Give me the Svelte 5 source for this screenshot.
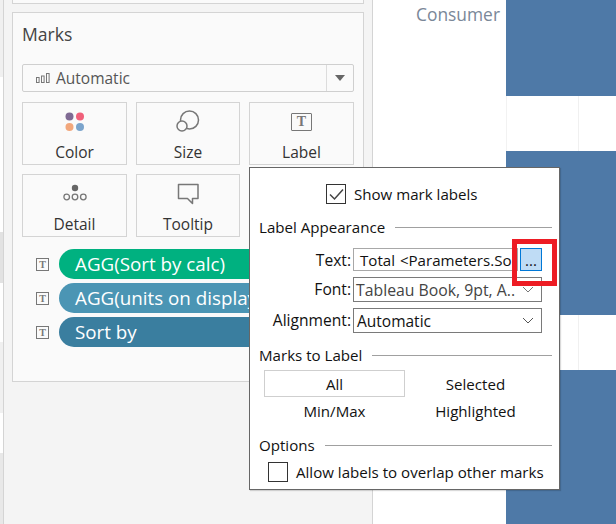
<script>
  const strip = [
    { h: 77, c: '#f0f0f0' },
    { h: 155, c: '#ffffff' },
    { h: 51, c: '#e2e2e2' },
    { h: 59, c: '#ffffff' },
    { h: 71, c: '#f0f0f0' },
    { h: 40, c: '#ffffff' },
    { h: 71, c: '#e8e8e8' },
  ];
  const pills = [
    { name: 'AGG(Sort by calc)', color: '#00b180' },
    { name: 'AGG(units on display)', color: '#4b95b4' },
    { name: 'Sort by', color: '#3a7e9f' },
  ];
</script>

<div class="page">
  <div class="strip">
    {#each strip as s}
      <div style="height: {s.h}px; background: {s.c}"></div>
    {/each}
  </div>

  <aside class="sidebar">
    <div class="top-card"></div>
    <section class="marks">
      <h2>Marks</h2>
      <div class="mark-type">
        <svg width="14" height="10" viewBox="0 0 14 10" fill="none" stroke="#777" stroke-width="1">
          <rect x="0.5" y="4.5" width="2.6" height="5" />
          <rect x="5.5" y="3" width="2.6" height="6.5" />
          <rect x="10.5" y="0.5" width="2.6" height="9" />
        </svg>
        <span class="mark-name">Automatic</span>
        <span class="caret"><i></i></span>
      </div>

      <div class="shelf">
        <div class="tile">
          <svg width="24" height="24" viewBox="0 0 24 24">
            <circle cx="6.5" cy="6.5" r="4" fill="#7f6a93" />
            <circle cx="17" cy="6.5" r="4" fill="#f0607a" />
            <circle cx="6.5" cy="17" r="4" fill="#f2a77c" />
            <circle cx="17" cy="17" r="4" fill="#7ba4cc" />
          </svg>
          <span>Color</span>
        </div>
        <div class="tile">
          <svg width="24" height="24" viewBox="0 0 24 24" fill="none" stroke="#777" stroke-width="1.5">
            <circle cx="13.5" cy="10" r="9" />
            <circle cx="6" cy="16" r="5" fill="#fafafa" />
          </svg>
          <span>Size</span>
        </div>
        <div class="tile">
          <span class="t-icon big">T</span>
          <span>Label</span>
        </div>
        <div class="tile">
          <svg width="24" height="24" viewBox="0 0 24 24">
            <circle cx="12" cy="6" r="3.2" fill="#666" />
            <g fill="none" stroke="#777" stroke-width="1.3">
              <circle cx="3.7" cy="15" r="2.8" />
              <circle cx="12" cy="15" r="2.8" />
              <circle cx="20.3" cy="15" r="2.8" />
            </g>
          </svg>
          <span>Detail</span>
        </div>
        <div class="tile">
          <svg width="24" height="24" viewBox="0 0 24 24" fill="none" stroke="#777" stroke-width="1.5" stroke-linejoin="round">
            <path d="M2.5 2.5h19.5v14h-5.5v5l-5-5H2.5z" />
          </svg>
          <span>Tooltip</span>
        </div>
        <div class="tile"></div>
      </div>

      <div class="fields">
        {#each pills as p}
          <div class="field">
            <span class="t-icon">T</span>
            <span class="pill" style="background: {p.color}">{p.name}</span>
          </div>
        {/each}
      </div>
    </section>
  </aside>

  <main class="chart">
    <div class="headers"><span>Consumer</span></div>
    <div class="bars">
      <div class="bar" style="height: 96px"></div>
      <div class="gap" style="height: 55px"></div>
      <div class="bar" style="height: 164px"></div>
      <div class="gap" style="height: 55px"></div>
      <div class="bar" style="height: 154px"></div>
    </div>
  </main>

  <div class="popup">
    <label class="show">
      <span class="check">
        <svg width="15" height="13" viewBox="0 0 15 13" fill="none" stroke="#444" stroke-width="1.5">
          <path d="M1 6.5l4.5 4.5L14 1.5" />
        </svg>
      </span>
      Show mark labels
    </label>

    <div class="legend"><span>Label Appearance</span><hr /></div>
    <div class="form">
      <span class="lbl">Text:</span>
      <div class="text-row">
        <div class="input">Total &lt;Parameters.So</div>
        <button class="dots">...</button>
      </div>
      <span class="lbl">Font:</span>
      <div class="select font-sel">
        <span>Tableau Book, 9pt, A..</span>
        <svg class="chev" width="12" height="7" viewBox="0 0 12 7" fill="none" stroke="#777" stroke-width="1"><path d="M1 1l5 5 5-5" /></svg>
      </div>
      <span class="lbl">Alignment:</span>
      <div class="select">
        <span>Automatic</span>
        <svg class="chev" width="12" height="7" viewBox="0 0 12 7" fill="none" stroke="#555" stroke-width="1"><path d="M1 1l5 5 5-5" /></svg>
      </div>
    </div>

    <div class="legend marks-leg"><span>Marks to Label</span><hr /></div>
    <div class="choices">
      <div class="choice on">All</div>
      <div class="choice">Selected</div>
      <div class="choice">Min/Max</div>
      <div class="choice">Highlighted</div>
    </div>

    <div class="legend options-leg"><span>Options</span><hr /></div>
    <label class="overlap">
      <span class="check"></span>
      Allow labels to overlap other marks
    </label>

    <div class="callout"></div>
  </div>
</div>

<style>
  :global(body) {
    margin: 0;
  }

  .page {
    display: flex;
    width: 616px;
    height: 524px;
    position: relative;
    overflow: hidden;
    font-family: "Open Sans", "Noto Sans", sans-serif;
    color: #222;
  }

  .strip {
    width: 3px;
    flex: none;
    border-right: 1px solid #d4d4d4;
  }

  .sidebar {
    width: 369px;
    flex: none;
    box-sizing: border-box;
    padding: 0 8px;
    background: #f4f4f4;
    border-right: 1px solid #d4d4d4;
  }

  .top-card {
    height: 3px;
    background: #fafafa;
    border: 1px solid #d4d4d4;
    border-top: 0;
    margin-bottom: 8px;
  }

  .marks {
    height: 370px;
    box-sizing: border-box;
    padding: 0 9px;
    background: #fafafa;
    border: 1px solid #d4d4d4;
  }

  h2 {
    margin: 0;
    padding-top: 9px;
    height: 42px;
    font-size: 17.6px;
    font-weight: 400;
    line-height: 24px;
    color: #444;
  }

  .mark-type {
    display: flex;
    align-items: center;
    height: 28px;
    box-sizing: border-box;
    padding-left: 13px;
    border: 1px solid #cfcfcf;
    border-radius: 2px;
    font-size: 15.5px;
    color: #555;
  }

  .mark-name {
    margin-left: 6px;
    flex: 1;
  }

  .caret {
    width: 26px;
    align-self: stretch;
    display: flex;
    align-items: center;
    justify-content: center;
    border-left: 1px solid #dcdcdc;
  }

  .caret i {
    width: 0;
    height: 0;
    border-left: 5px solid transparent;
    border-right: 5px solid transparent;
    border-top: 6px solid #666;
  }

  .shelf {
    display: grid;
    grid-template-columns: 105px 104px 105px;
    grid-auto-rows: 63px;
    column-gap: 9px;
    row-gap: 9px;
    margin-top: 10px;
  }

  .tile {
    display: flex;
    flex-direction: column;
    align-items: center;
    box-sizing: border-box;
    padding-top: 7px;
    border: 1px solid #d4d4d4;
    font-size: 15.5px;
    color: #333;
  }

  .tile svg, .tile .big {
    flex: none;
  }

  .tile svg {
    height: 24px;
  }

  .tile > span:last-child {
    margin-top: 6px;
    line-height: 24px;
  }

  .t-icon {
    width: 13px;
    height: 13px;
    box-sizing: border-box;
    display: flex;
    align-items: center;
    justify-content: center;
    border: 1px solid #777;
    font-family: "Liberation Serif", serif;
    font-size: 10px;
    font-weight: 700;
    color: #777;
    flex: none;
  }

  .t-icon.big {
    width: 21px;
    height: 18px;
    margin: 3px 0;
    border-width: 1.5px;
    border-radius: 1px;
    font-size: 14px;
  }

  .fields {
    display: flex;
    flex-direction: column;
    gap: 4px;
    margin-top: 12px;
    padding-left: 14px;
  }

  .field {
    display: flex;
    align-items: center;
    gap: 10px;
  }

  .pill {
    flex: 1;
    height: 30px;
    line-height: 30px;
    padding-left: 16px;
    border-radius: 15px 0 0 15px;
    color: #fff;
    font-size: 18.8px;
    white-space: nowrap;
    overflow: hidden;
  }

  .chart {
    flex: 1;
    display: flex;
    background: #fff;
  }

  .headers {
    width: 133px;
    flex: none;
    box-sizing: border-box;
    padding: 3px 6px 0 0;
    text-align: right;
    font-size: 17.4px;
    line-height: 22px;
    color: #7a8798;
  }

  .bars {
    flex: 1;
    display: flex;
    flex-direction: column;
  }

  .bar {
    background: #4e79a7;
  }

  .gap {
    width: 73px;
    box-sizing: border-box;
    border-left: 1px solid #f2f2f2;
    border-right: 1px solid #f0f0f0;
  }

  .popup {
    position: absolute;
    left: 249px;
    top: 167px;
    width: 311px;
    height: 323px;
    box-sizing: border-box;
    padding: 0 7px 0 9px;
    background: #fff;
    border: 1px solid #666;
    font-size: 15.1px;
    line-height: 22px;
    color: #111;
    box-shadow: 1px 1px 1px rgba(0, 0, 0, 0.15);
  }

  .show {
    display: flex;
    align-items: center;
    gap: 8px;
    height: 20px;
    margin: 16px 0 0 67px;
  }

  .check {
    width: 20px;
    height: 20px;
    box-sizing: border-box;
    display: flex;
    align-items: center;
    justify-content: center;
    border: 1px solid #333;
    flex: none;
  }

  .legend {
    display: flex;
    align-items: center;
    gap: 10px;
    margin-top: 12px;
    height: 22px;
  }

  .legend hr {
    flex: 1;
    height: 1px;
    margin: 0;
    border: 0;
    background: #a0a0a0;
  }

  .form {
    display: grid;
    grid-template-columns: 92px 189px;
    grid-template-rows: 23px 25px 25px;
    column-gap: 2px;
    row-gap: 6px;
    margin-top: 10px;
  }

  .lbl {
    text-align: right;
    font-size: 15.6px;
    line-height: 25px;
  }

  .text-row {
    display: flex;
    justify-content: space-between;
    height: 23px;
  }

  .input {
    width: 165px;
    box-sizing: border-box;
    padding: 1px 0 0 6px;
    border: 1px solid #a8a8a8;
    line-height: 21px;
    word-spacing: 1px;
    white-space: nowrap;
    overflow: hidden;
  }

  .dots {
    width: 22px;
    height: 23px;
    padding: 0;
    border: 1px solid #0078d7;
    background: #bfdcf5;
    font-family: inherit;
    font-size: 15px;
    line-height: 18px;
    color: #111;
  }

  .select {
    display: flex;
    align-items: center;
    justify-content: space-between;
    height: 25px;
    box-sizing: border-box;
    padding: 0 7px 0 3px;
    border: 1px solid #7a7a7a;
    font-size: 15.5px;
  }

  .font-sel {
    padding-left: 2px;
    color: #444;
    font-size: 15.8px;
  }

  .font-sel span {
    white-space: nowrap;
  }

  .chev {
    flex: none;
  }

  .marks-leg {
    margin-top: 11px;
  }

  .choices {
    display: grid;
    grid-template-columns: 141px 141px;
    grid-auto-rows: 27px;
    margin: 4px 0 0 5px;
  }

  .choice {
    display: flex;
    align-items: center;
    justify-content: center;
    box-sizing: border-box;
  }

  .choice.on {
    border: 1px solid #cfcfcf;
  }

  .options-leg {
    margin-top: 10px;
  }

  .overlap {
    display: flex;
    align-items: center;
    gap: 8px;
    height: 20px;
    margin: 6px 0 0 9px;
    white-space: nowrap;
  }

  .callout {
    position: absolute;
    left: 262px;
    top: 71px;
    width: 45px;
    height: 47px;
    box-sizing: border-box;
    border: 5px solid #ed1c24;
  }
</style>
